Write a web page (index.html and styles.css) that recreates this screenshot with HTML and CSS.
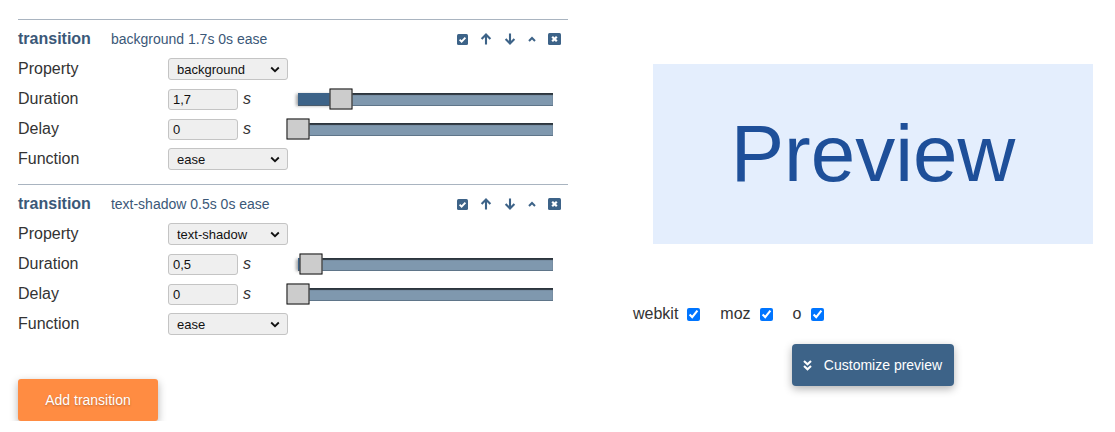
FILE: index.html
```html
<!DOCTYPE html>
<html lang="en">
<head>
  <meta charset="UTF-8" />
  <title>CSS3 Transition Generator</title>
  <link rel="stylesheet" href="styles.css">
</head>
<body>

<div class="page">
  <div class="editor">

    <div class="transition">
      <div class="head">
        <span class="title">transition</span>
        <span class="summary">background 1.7s 0s ease</span>
        <div class="tools">
          <svg width="11" height="11" viewBox="0 0 11 11"><rect width="11" height="11" rx="1.5" fill="#3d6388"/><path d="M2.6 5.6 L4.6 7.6 L8.4 3.6" stroke="#fff" stroke-width="1.9" fill="none"/></svg>
          <svg width="12" height="12" viewBox="0 0 12 12"><path d="M6 11.5 V1.5 M1.6 5.9 L6 1.5 L10.4 5.9" stroke="#3d6388" stroke-width="2.1" fill="none"/></svg>
          <svg width="12" height="12" viewBox="0 0 12 12"><path d="M6 0.5 V10.5 M1.6 6.1 L6 10.5 L10.4 6.1" stroke="#3d6388" stroke-width="2.1" fill="none"/></svg>
          <svg width="8" height="6" viewBox="0 0 8 6"><path d="M1 5 L4 2 L7 5" stroke="#3d6388" stroke-width="2" fill="none"/></svg>
          <svg width="13" height="12" viewBox="0 0 13 12"><rect width="13" height="12" rx="1.5" fill="#3d6388"/><path d="M4.2 3.7 L8.8 8.3 M8.8 3.7 L4.2 8.3" stroke="#fff" stroke-width="2.2" fill="none"/></svg>
        </div>
      </div>
      <div class="row">
        <label>Property</label>
        <span class="select-wrap">
          <select><option>background</option></select>
          <svg class="chev" width="10" height="7" viewBox="0 0 10 7"><path d="M1.2 1.5 L5 5.2 L8.8 1.5" stroke="#111" stroke-width="1.8" fill="none"/></svg>
        </span>
      </div>
      <div class="row">
        <label>Duration</label>
        <span class="num"><input type="text" value="1,7" /><i>s</i></span>
        <div class="slider"><div class="fill" style="width:17%"></div><div class="thumb" style="left:17%"></div></div>
      </div>
      <div class="row">
        <label>Delay</label>
        <span class="num"><input type="text" value="0" /><i>s</i></span>
        <div class="slider"><div class="fill" style="width:0%"></div><div class="thumb" style="left:0%"></div></div>
      </div>
      <div class="row">
        <label>Function</label>
        <span class="select-wrap">
          <select><option>ease</option></select>
          <svg class="chev" width="10" height="7" viewBox="0 0 10 7"><path d="M1.2 1.5 L5 5.2 L8.8 1.5" stroke="#111" stroke-width="1.8" fill="none"/></svg>
        </span>
      </div>
    </div>

    <div class="transition">
      <div class="head">
        <span class="title">transition</span>
        <span class="summary">text-shadow 0.5s 0s ease</span>
        <div class="tools">
          <svg width="11" height="11" viewBox="0 0 11 11"><rect width="11" height="11" rx="1.5" fill="#3d6388"/><path d="M2.6 5.6 L4.6 7.6 L8.4 3.6" stroke="#fff" stroke-width="1.9" fill="none"/></svg>
          <svg width="12" height="12" viewBox="0 0 12 12"><path d="M6 11.5 V1.5 M1.6 5.9 L6 1.5 L10.4 5.9" stroke="#3d6388" stroke-width="2.1" fill="none"/></svg>
          <svg width="12" height="12" viewBox="0 0 12 12"><path d="M6 0.5 V10.5 M1.6 6.1 L6 10.5 L10.4 6.1" stroke="#3d6388" stroke-width="2.1" fill="none"/></svg>
          <svg width="8" height="6" viewBox="0 0 8 6"><path d="M1 5 L4 2 L7 5" stroke="#3d6388" stroke-width="2" fill="none"/></svg>
          <svg width="13" height="12" viewBox="0 0 13 12"><rect width="13" height="12" rx="1.5" fill="#3d6388"/><path d="M4.2 3.7 L8.8 8.3 M8.8 3.7 L4.2 8.3" stroke="#fff" stroke-width="2.2" fill="none"/></svg>
        </div>
      </div>
      <div class="row">
        <label>Property</label>
        <span class="select-wrap">
          <select><option>text-shadow</option></select>
          <svg class="chev" width="10" height="7" viewBox="0 0 10 7"><path d="M1.2 1.5 L5 5.2 L8.8 1.5" stroke="#111" stroke-width="1.8" fill="none"/></svg>
        </span>
      </div>
      <div class="row">
        <label>Duration</label>
        <span class="num"><input type="text" value="0,5" /><i>s</i></span>
        <div class="slider"><div class="fill" style="width:5%"></div><div class="thumb" style="left:5%"></div></div>
      </div>
      <div class="row">
        <label>Delay</label>
        <span class="num"><input type="text" value="0" /><i>s</i></span>
        <div class="slider"><div class="fill" style="width:0%"></div><div class="thumb" style="left:0%"></div></div>
      </div>
      <div class="row">
        <label>Function</label>
        <span class="select-wrap">
          <select><option>ease</option></select>
          <svg class="chev" width="10" height="7" viewBox="0 0 10 7"><path d="M1.2 1.5 L5 5.2 L8.8 1.5" stroke="#111" stroke-width="1.8" fill="none"/></svg>
        </span>
      </div>
    </div>

    <button class="btn-add">Add transition</button>
  </div>

  <div class="side">
    <div class="preview">Preview</div>
    <div class="prefixes">
      <label>webkit <input type="checkbox" checked /></label>
      <label>moz <input type="checkbox" checked /></label>
      <label>o <input type="checkbox" checked /></label>
    </div>
    <div class="customize">
      <button class="btn-custom">
        <svg width="9" height="11" viewBox="0 0 9 11"><path d="M1 1 L4.5 4.3 L8 1 M1 6 L4.5 9.3 L8 6" stroke="#fff" stroke-width="2.1" fill="none"/></svg>
        Customize preview
      </button>
    </div>
  </div>
</div>

</body>
</html>
```

FILE: styles.css
```css
body {
  margin: 0;
  font-family: "Liberation Sans", Arial, sans-serif;
  background: #fff;
  color: #333;
}
.page {
  display: flex;
  align-items: flex-start;
}
.editor {
  width: 550px;
  margin-left: 18px;
  padding-top: 19px;
}
.transition {
  border-top: 1px solid #a9b4c0;
  padding: 4px 0 10px;
}
.head {
  display: flex;
  align-items: center;
  height: 30px;
}
.title {
  font-weight: bold;
  font-size: 16px;
  color: #3b5878;
}
.summary {
  font-size: 14px;
  color: #3b5878;
  margin-left: 20px;
}
.tools {
  margin-left: auto;
  margin-right: 7px;
  display: flex;
  align-items: center;
  gap: 12px;
}
.tools svg {
  display: block;
}
.row {
  display: grid;
  grid-template-columns: 150px 130px 255px;
  align-items: center;
  height: 30px;
}
.row label {
  font-size: 16px;
  color: #333;
}
.select-wrap {
  position: relative;
  display: block;
  width: 120px;
}
.select-wrap select {
  appearance: none;
  width: 120px;
  height: 22px;
  padding: 0 0 0 8px;
  font-family: "Liberation Sans", Arial, sans-serif;
  font-size: 13px;
  color: #111;
  background: #efefef;
  border: 1px solid #c4c4c4;
  border-radius: 3px;
  display: block;
}
.chev {
  position: absolute;
  right: 8px;
  top: 8px;
  pointer-events: none;
}
.num {
  display: flex;
  align-items: center;
}
.num input {
  width: 70px;
  height: 21px;
  box-sizing: border-box;
  padding: 0 4px;
  font-family: "Liberation Sans", Arial, sans-serif;
  font-size: 13px;
  color: #111;
  background: #efefef;
  border: 1px solid #c4c4c4;
  border-radius: 3px;
}
.num i {
  font-size: 16px;
  margin-left: 5px;
  color: #333;
}
.slider {
  position: relative;
  height: 12px;
  background: #7f98ae;
  box-shadow: inset 0 2px 1px rgba(0,0,0,0.65);
  border-bottom: 1px solid #5f7589;
}
.fill {
  position: absolute;
  left: 0;
  top: 0;
  bottom: 0;
  background: #3d6388;
  box-shadow: -2px 1px 3px rgba(0,0,0,0.35);
}
.thumb {
  position: absolute;
  top: 50%;
  width: 21px;
  height: 19px;
  transform: translate(-50%, -50%);
  background: #cccccc;
  border: 1.5px solid #111;
}
.btn-add {
  margin-top: 30px;
  width: 140px;
  height: 42px;
  background: #ff8c42;
  color: #fff;
  border: none;
  border-radius: 3px;
  font-family: "Liberation Sans", Arial, sans-serif;
  font-size: 14px;
  text-shadow: 0 1px 2px rgba(0,0,0,0.25);
  box-shadow: 0 3px 8px rgba(0,0,0,0.3);
  cursor: pointer;
}
.side {
  margin-left: 65px;
  padding-top: 64px;
  width: 460px;
}
.preview {
  margin-left: 20px;
  width: 440px;
  height: 180px;
  background: #e4eefd;
  color: #1e4f99;
  font-size: 80px;
  display: flex;
  align-items: center;
  justify-content: center;
}
.prefixes {
  margin-top: 61px;
  display: flex;
  font-size: 16px;
  color: #333;
}
.prefixes label {
  display: flex;
  align-items: center;
  margin-right: 20px;
}
.prefixes input {
  width: 13px;
  height: 13px;
  margin: 0 0 0 9px;
  accent-color: #0075ff;
}
.customize {
  margin-left: 20px;
  width: 440px;
  margin-top: 21px;
  display: flex;
  justify-content: center;
}
.btn-custom {
  display: flex;
  align-items: center;
  gap: 12px;
  height: 42px;
  padding: 0 12px 0 11px;
  background: #3d6388;
  color: #fff;
  border: none;
  border-radius: 4px;
  font-family: "Liberation Sans", Arial, sans-serif;
  font-size: 14px;
  box-shadow: 0 3px 8px rgba(0,0,0,0.3);
  cursor: pointer;
}
```
